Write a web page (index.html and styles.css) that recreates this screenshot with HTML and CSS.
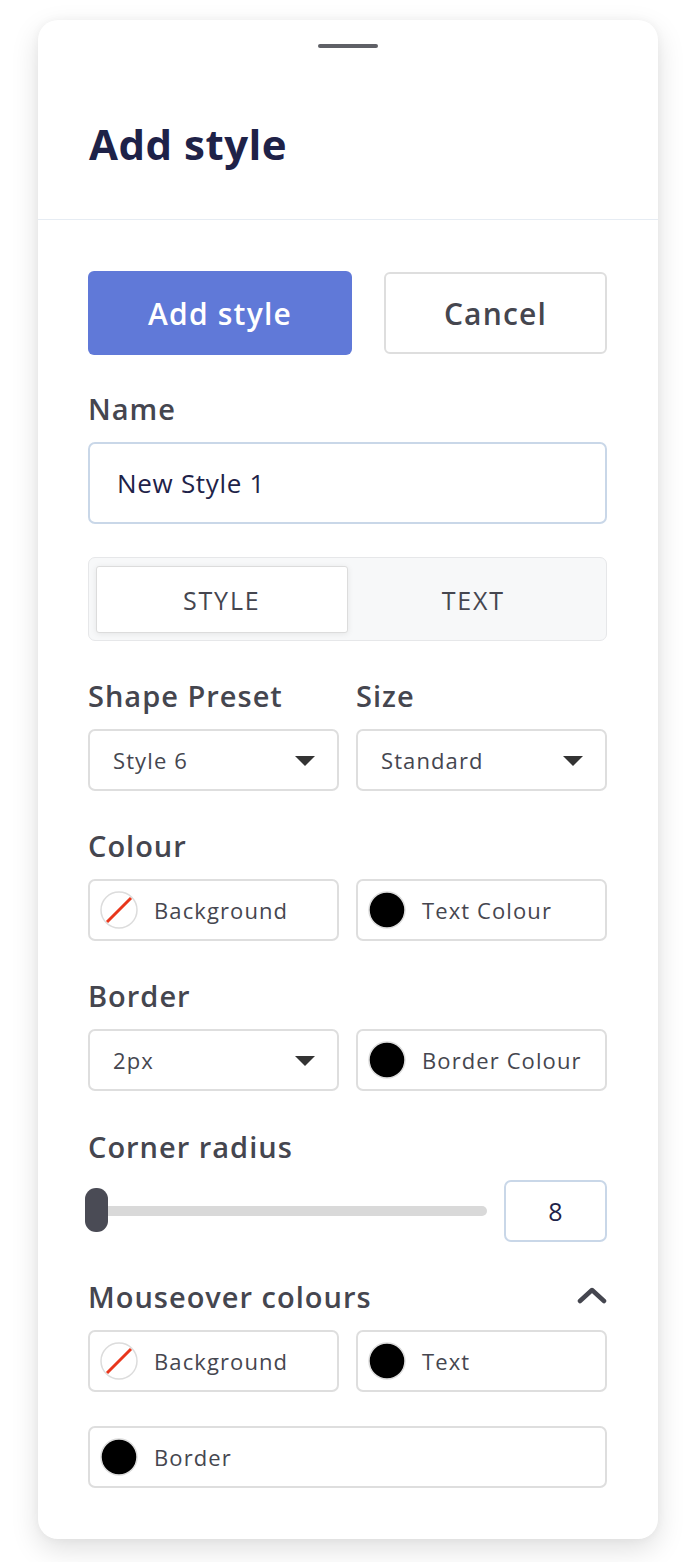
FILE: index.html
```html
<!DOCTYPE html>
<html lang="en">
<head>
<meta charset="utf-8">
<title>Add style</title>
<link rel="stylesheet" href="styles.css">
</head>
<body>
<div class="card">
  <div class="header">
    <div class="handle"></div>
    <h1 class="title">Add style</h1>
  </div>
  <div class="content">
    <div class="actions">
      <button class="btn btn-primary">Add style</button>
      <button class="btn btn-secondary">Cancel</button>
    </div>

    <div class="group group-name">
      <div class="label">Name</div>
      <div class="input">New Style 1</div>
    </div>

    <div class="tabs">
      <div class="tab tab-active">STYLE</div>
      <div class="tab">TEXT</div>
    </div>

    <div class="group grid2">
      <div class="label">Shape Preset</div>
      <div class="label">Size</div>
      <div class="select"><span>Style 6</span><svg class="caret" width="20" height="10" viewBox="0 0 20 10"><path d="M0 0 H20 L10 10 Z" fill="#333"/></svg></div>
      <div class="select"><span>Standard</span><svg class="caret" width="20" height="10" viewBox="0 0 20 10"><path d="M0 0 H20 L10 10 Z" fill="#333"/></svg></div>
    </div>

    <div class="group">
      <div class="label">Colour</div>
      <div class="grid2">
        <div class="swatch-btn">
          <svg class="swatch" width="38" height="38" viewBox="0 0 38 38"><circle cx="19" cy="19" r="18" fill="#fff" stroke="#dcdcdc" stroke-width="1.5"/><line x1="7" y1="31" x2="31" y2="7" stroke="#e8361c" stroke-width="3"/></svg>
          <span>Background</span>
        </div>
        <div class="swatch-btn">
          <svg class="swatch" width="38" height="38" viewBox="0 0 38 38"><circle cx="19" cy="19" r="18" fill="#000" stroke="#dcdcdc" stroke-width="1.5"/></svg>
          <span>Text Colour</span>
        </div>
      </div>
    </div>

    <div class="group">
      <div class="label">Border</div>
      <div class="grid2">
        <div class="select"><span>2px</span><svg class="caret" width="20" height="10" viewBox="0 0 20 10"><path d="M0 0 H20 L10 10 Z" fill="#333"/></svg></div>
        <div class="swatch-btn">
          <svg class="swatch" width="38" height="38" viewBox="0 0 38 38"><circle cx="19" cy="19" r="18" fill="#000" stroke="#dcdcdc" stroke-width="1.5"/></svg>
          <span>Border Colour</span>
        </div>
      </div>
    </div>

    <div class="group group-slider">
      <div class="label">Corner radius</div>
      <div class="slider-row">
        <div class="slider">
          <div class="track"></div>
          <div class="thumb"></div>
        </div>
        <div class="number">8</div>
      </div>
    </div>

    <div class="group">
      <div class="label-row">
        <div class="label">Mouseover colours</div>
        <svg class="chevron" width="30" height="18" viewBox="0 0 30 18"><path d="M3 15 L15 4 L27 15" fill="none" stroke="#45464f" stroke-width="4.5" stroke-linecap="round" stroke-linejoin="round"/></svg>
      </div>
      <div class="grid2">
        <div class="swatch-btn">
          <svg class="swatch" width="38" height="38" viewBox="0 0 38 38"><circle cx="19" cy="19" r="18" fill="#fff" stroke="#dcdcdc" stroke-width="1.5"/><line x1="7" y1="31" x2="31" y2="7" stroke="#e8361c" stroke-width="3"/></svg>
          <span>Background</span>
        </div>
        <div class="swatch-btn">
          <svg class="swatch" width="38" height="38" viewBox="0 0 38 38"><circle cx="19" cy="19" r="18" fill="#000" stroke="#dcdcdc" stroke-width="1.5"/></svg>
          <span>Text</span>
        </div>
      </div>
      <div class="swatch-btn full">
        <svg class="swatch" width="38" height="38" viewBox="0 0 38 38"><circle cx="19" cy="19" r="18" fill="#000" stroke="#dcdcdc" stroke-width="1.5"/></svg>
        <span>Border</span>
      </div>
    </div>
  </div>
</div>
</body>
</html>
```

FILE: styles.css
```css
* { box-sizing: border-box; }

html, body {
  margin: 0;
  padding: 0;
  background: #ffffff;
}

body {
  font-family: "Open Sans", Lato, "Liberation Sans", sans-serif;
  color: #45464f;
  width: 686px;
  height: 1562px;
  overflow: hidden;
  padding-top: 20px;
  padding-left: 38px;
}

.card {
  width: 620px;
  height: 1519px;
  background: #fff;
  border-radius: 20px;
  box-shadow: 0 10px 28px rgba(0, 0, 0, 0.13), 0 0 10px rgba(0, 0, 0, 0.04);
  overflow: hidden;
}

.header {
  padding: 24px 50px 50px 51px;
  border-bottom: 1px solid #e6ecf3;
}

.handle {
  width: 60px;
  height: 4px;
  border-radius: 2px;
  background: #5f6066;
  margin: 0 auto;
  position: relative;
  left: -1px;
}

.title {
  margin: 71px 0 0 0;
  font-size: 42px;
  line-height: 50px;
  font-weight: 700;
  color: #1e2248;
  letter-spacing: 0.5px;
}

.content {
  padding: 51px 51px 51px 50px;
}

.actions {
  display: grid;
  grid-template-columns: 264px 1fr;
  column-gap: 32px;
}

.btn {
  height: 84px;
  border-radius: 6px;
  font-family: inherit;
  font-size: 30px;
  font-weight: 600;
  letter-spacing: 1.2px;
  cursor: pointer;
}

.btn-primary {
  background: #6079d8;
  color: #fff;
  border: none;
}

.btn-secondary {
  background: #fff;
  color: #45464f;
  border: 2px solid #dedede;
  height: 82px;
  margin-top: 1px;
}

.group {
  margin-top: 38px;
}

.group-name {
  margin-top: 37px;
}

.group-slider {
  margin-top: 39px;
}

.label {
  font-size: 29px;
  line-height: 34px;
  font-weight: 600;
  color: #45464f;
  margin-bottom: 16px;
  letter-spacing: 1px;
}

.input {
  height: 82px;
  border: 2px solid #c9d7e8;
  border-radius: 7px;
  display: flex;
  align-items: center;
  padding-left: 27px;
  font-size: 26px;
  letter-spacing: 0.7px;
  color: #1e2248;
}

.tabs {
  margin-top: 33px;
  height: 84px;
  background: #f7f8f9;
  border: 1px solid #e6e7e9;
  border-radius: 7px;
  padding: 8px 7px 7px 7px;
  display: grid;
  grid-template-columns: 1fr 1fr;
}

.tab {
  display: flex;
  align-items: center;
  justify-content: center;
  font-size: 25px;
  letter-spacing: 1.8px;
  color: #45464f;
}

.tab-active {
  background: #fff;
  border: 1px solid #dcdcdc;
  border-radius: 3px;
  box-shadow: 0 1px 6px rgba(0, 0, 0, 0.08);
}

.grid2 {
  display: grid;
  grid-template-columns: 1fr 1fr;
  column-gap: 17px;
}

.select {
  height: 62px;
  border: 2px solid #dedede;
  border-radius: 7px;
  display: flex;
  align-items: center;
  justify-content: space-between;
  padding: 0 22px 0 23px;
  font-size: 22px;
  letter-spacing: 1.1px;
  color: #45464f;
}

.caret {
  display: block;
  margin-top: 1px;
}

.swatch-btn {
  height: 62px;
  border: 2px solid #dedede;
  border-radius: 7px;
  display: flex;
  align-items: center;
  padding-left: 10px;
  gap: 16px;
  font-size: 22px;
  letter-spacing: 1.1px;
  color: #45464f;
}

.swatch {
  display: block;
  flex: none;
}

.swatch-btn.full {
  margin-top: 34px;
}

.slider-row {
  display: flex;
  align-items: center;
  gap: 17px;
}

.slider {
  flex: 1;
  position: relative;
  height: 62px;
  display: flex;
  align-items: center;
}

.track {
  width: 100%;
  height: 10px;
  border-radius: 5px;
  background: #d9d9d9;
}

.thumb {
  position: absolute;
  left: -3px;
  top: 8px;
  width: 23px;
  height: 44px;
  border-radius: 11px;
  background: #4a4b55;
}

.number {
  width: 103px;
  height: 62px;
  border: 2px solid #c9d7e8;
  border-radius: 7px;
  display: flex;
  align-items: center;
  justify-content: center;
  font-size: 25px;
  color: #1e2248;
}

.label-row {
  display: flex;
  align-items: flex-start;
  justify-content: space-between;
}

.chevron {
  display: block;
  margin-top: 6px;
}
```
